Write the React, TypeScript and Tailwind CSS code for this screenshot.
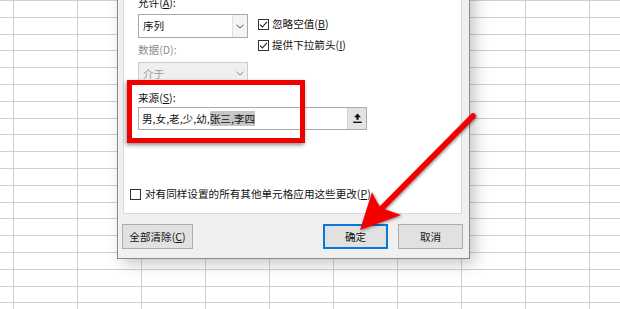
import React from "react";

const FONT = { fontFamily: '"Noto Sans CJK SC", "Noto Sans", sans-serif' };

function CheckBox({ checked }: { checked: boolean }) {
  return (
    <svg width="11" height="11" viewBox="0 0 11 11" className="shrink-0">
      <rect x="0.5" y="0.5" width="10" height="10" fill="#fff" stroke="#333" strokeWidth="1" />
      {checked && (
        <path d="M2 5.6 L4.4 8 L9 2.8" fill="none" stroke="#222" strokeWidth="1.1" />
      )}
    </svg>
  );
}

function Chevron({ color }: { color: string }) {
  return (
    <svg width="8" height="5" viewBox="0 0 8 5">
      <path d="M0.5 0.8 L4 4 L7.5 0.8" fill="none" stroke={color} strokeWidth="1" />
    </svg>
  );
}

function U({ children }: { children: React.ReactNode }) {
  return <span className="underline underline-offset-[1px] decoration-[0.8px]">{children}</span>;
}

export default function App() {
  const rows = Array.from({ length: 19 });
  const cols = Array.from({ length: 10 });
  return (
    <div
      className="relative w-[620px] h-[309px] overflow-hidden bg-white text-[10.6px] text-[#111]"
      style={FONT}
    >
      {/* spreadsheet grid */}
      <div className="flex flex-col">
        {rows.map((_, r) => (
          <div key={r} className="flex h-[16.8px] shrink-0 border-t border-[#d0d0d0]">
            <div className="w-[14px] shrink-0 border-r border-[#d0d0d0]" />
            {cols.map((_, c) => (
              <div key={c} className="w-[64px] shrink-0 border-r border-[#d0d0d0]" />
            ))}
          </div>
        ))}
      </div>

      {/* dialog */}
      <div className="absolute left-[117px] top-[-20px] w-[353px] h-[279px] flex flex-col bg-[#f0f0f0] border border-[#888888] shadow-[5px_5px_14px_rgba(0,0,0,0.22)]">
        <div className="ml-[5px] mr-[7px] h-[233px] shrink-0 bg-white border border-t-0 border-[#d9d9d9] pt-[15px] pl-[6px] flex flex-col">
          <div className="ml-[8px] flex">
            <div className="w-[110px] flex flex-col">
              <div className="h-[14px] leading-[14px] whitespace-nowrap">
                允许(<U>A</U>):
              </div>
              <div className="mt-[4px] h-[24px] flex border border-[#a9a9a9] bg-white">
                <div className="flex-1 pl-[4px] flex items-center">序列</div>
                <div className="w-[15px] flex items-center justify-center border-l border-[#e0e0e0] bg-[#f4f4f4]">
                  <Chevron color="#5a5a5a" />
                </div>
              </div>
              <div className="mt-[5px] h-[14px] leading-[14px] text-[#8d8d8d] whitespace-nowrap">
                数据(D):
              </div>
              <div className="mt-[5px] h-[23px] flex border border-[#cccccc] bg-[#efefef]">
                <div className="flex-1 pl-[4px] flex items-center text-[#9a9a9a]">介于</div>
                <div className="w-[15px] flex items-center justify-center">
                  <Chevron color="#8a8a8a" />
                </div>
              </div>
            </div>
            <div className="ml-[10px] flex flex-col">
              <div className="mt-[21px] h-[14px] flex items-center gap-[3px] whitespace-nowrap">
                <CheckBox checked />
                <span>
                  忽略空值(<U>B</U>)
                </span>
              </div>
              <div className="mt-[7px] h-[14px] flex items-center gap-[3px] whitespace-nowrap">
                <CheckBox checked />
                <span>
                  提供下拉箭头(<U>I</U>)
                </span>
              </div>
            </div>
          </div>

          <div className="ml-[8px] mt-[6px] h-[14px] leading-[14px] whitespace-nowrap">
            来源(<U>S</U>):
          </div>
          <div className="ml-[8px] mt-[2px] w-[229px] h-[23px] flex border border-[#ababab] bg-white">
            <div className="flex-1 pl-[3px] flex items-center whitespace-nowrap">
              <span>男,女,老,少,幼,</span>
              <span className="bg-[#c6c6c6]">张三,李四</span>
            </div>
            <div className="w-[19px] flex items-center justify-center bg-[#e3e3e3] border-l border-[#d0d0d0]">
              <svg width="11" height="11" viewBox="0 0 11 11">
                <path d="M5.5 0.5 L9 4.3 L6.6 4.3 L6.6 6.8 L4.4 6.8 L4.4 4.3 L2 4.3 Z" fill="#111" />
                <rect x="1.2" y="8.6" width="8.6" height="1.4" fill="#111" />
              </svg>
            </div>
          </div>

          <div className="mt-[57px] h-[14px] flex items-center gap-[4px] whitespace-nowrap">
            <CheckBox checked={false} />
            <span>
              对有同样设置的所有其他单元格应用这些更改(<U>P</U>)
            </span>
          </div>
        </div>

        <div className="mt-[10px] flex h-[25px]">
          <div className="ml-[4px] w-[71px] h-[25px] flex items-center justify-center bg-[#e1e1e1] border border-[#adadad] whitespace-nowrap">
            全部清除(<U>C</U>)
          </div>
          <div className="flex-1" />
          <div className="w-[65px] h-[25px] flex items-center justify-center bg-[#e1e1e1] border-2 border-[#0a78d7]">
            确定
          </div>
          <div className="ml-[10px] mr-[6px] w-[65px] h-[25px] flex items-center justify-center bg-[#e1e1e1] border border-[#adadad]">
            取消
          </div>
        </div>
      </div>

      {/* red highlight box */}
      <div className="absolute left-[127px] top-[80px] w-[178px] h-[63px] border-[5px] border-[#f20000] shadow-[-1px_2px_4px_rgba(0,0,0,0.45)]" />

      {/* red arrow */}
      <svg
        className="absolute left-0 top-0 drop-shadow-[1px_1px_1.5px_rgba(0,0,0,0.45)]"
        width="620"
        height="309"
        viewBox="0 0 620 309"
      >
        <line x1="473" y1="116" x2="382" y2="208" stroke="#f40000" strokeWidth="5.5" strokeLinecap="round" />
        <path d="M360 230 L372 192 Q377 203 381 208 Q390 211 401 215 Z" fill="#f40000" />
      </svg>
    </div>
  );
}
